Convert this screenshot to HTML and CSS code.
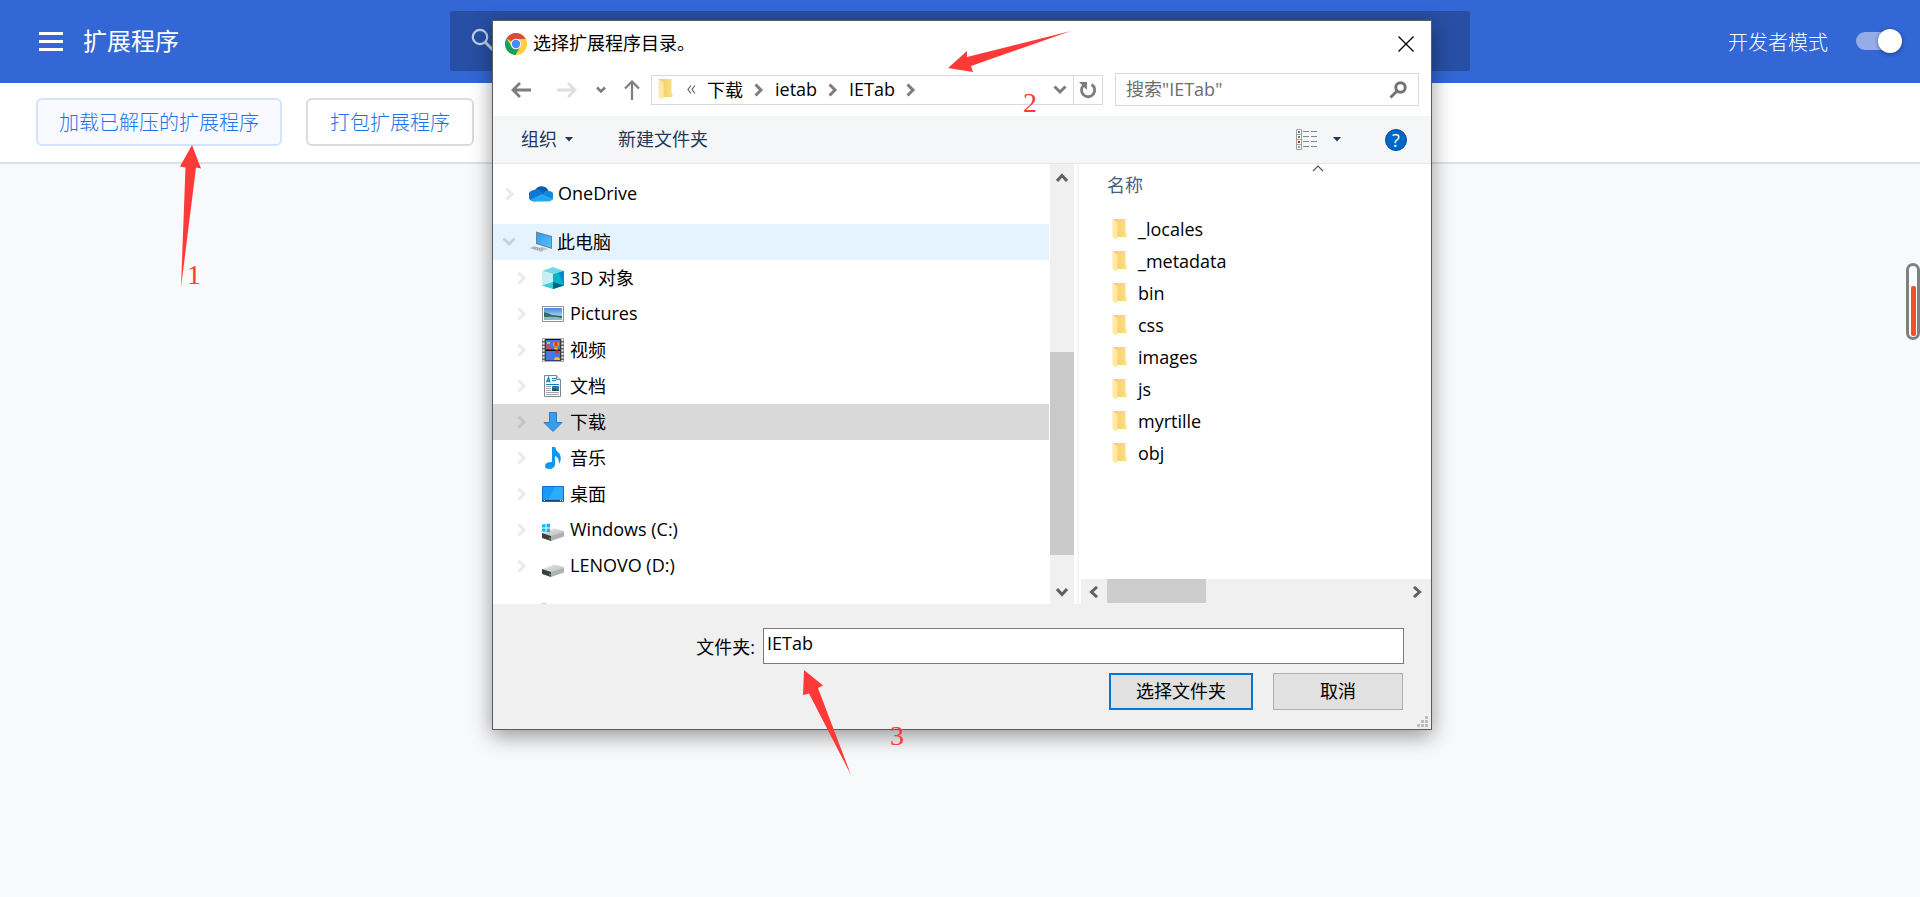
FILE: index.html
```html
<!DOCTYPE html>
<html lang="zh-CN">
<head>
<meta charset="utf-8">
<title>扩展程序</title>
<link rel="stylesheet" href="styles.css">
</head>
<body>
<svg class="defs" aria-hidden="true">
  <defs>
    <linearGradient id="gold" x1="0" x2="1" y1="0" y2="0"><stop offset="0" stop-color="#efcc66"/><stop offset="1" stop-color="#fddf83"/></linearGradient>
    <linearGradient id="metal" x1="0" x2="1" y1="0" y2="1"><stop offset="0" stop-color="#e9e9ea"/><stop offset="1" stop-color="#b9babc"/></linearGradient>
    <linearGradient id="screen" x1="0" x2="1" y1="0" y2="1"><stop offset="0" stop-color="#2f9cf0"/><stop offset="1" stop-color="#59c0fb"/></linearGradient>
    <linearGradient id="sky" x1="0" x2="0" y1="0" y2="1"><stop offset="0" stop-color="#4a86e0"/><stop offset="1" stop-color="#e5f1fa"/></linearGradient>
  </defs>
  <symbol id="folder" viewBox="0 0 16 22">
    <path d="M1 1h12.500v13.500l1 1V19H4z" fill="url(#gold)"/>
    <path d="M0.500 1l5 3.500v13.500l-1 4-4-3z" fill="#ffe9a6"/>
  </symbol>
  <symbol id="chev" viewBox="0 0 10 14"><path d="M1.500 1.500L7 7l-5.500 5.500" fill="none" stroke="currentColor" stroke-width="3"/></symbol>
  <symbol id="caret" viewBox="0 0 8 5"><path d="M0 0h8L4 4.500z" fill="currentColor"/></symbol>
  <symbol id="arrow" viewBox="0 0 12 10"><path d="M1 8l5-5.500L11 8" fill="none" stroke="currentColor" stroke-width="3"/></symbol>
  <symbol id="drive" viewBox="0 0 22 22">
    <path d="M0 14.500l12-5 10 2.500v3L9 18z" fill="url(#metal)"/>
    <path d="M0 14l9 3v5l-9-3z" fill="#3c3f40"/>
    <path d="M9 17l13-4v4.500L9 22z" fill="#b0b1b3"/>
    <path d="M7 18.500l1.500.5v1.500L7 20z" fill="#4fc04f"/>
  </symbol>
</svg>

<header class="topbar">
  <div class="topbar-left">
    <button class="menu" aria-label="主菜单"><span></span><span></span><span></span></button>
    <h1 class="page-title">扩展程序</h1>
  </div>
  <div class="top-search">
    <svg width="28" height="28" viewBox="0 0 28 28"><circle cx="10" cy="10" r="7.200" fill="none" stroke="currentColor" stroke-width="2.200"/><path d="M15 15l9 9" stroke="currentColor" stroke-width="3"/></svg>
    <input class="top-search-input" type="text" aria-label="搜索扩展程序">
  </div>
  <label class="dev-mode">开发者模式<input class="toggle" type="checkbox" checked></label>
</header>

<div class="actions">
  <button class="action action-on">加载已解压的扩展程序</button>
  <button class="action">打包扩展程序</button>
</div>

<section class="dialog" role="dialog" aria-label="选择扩展程序目录">
  <div class="titlebar">
    <svg width="22" height="22" viewBox="0 0 22 22"><circle cx="11" cy="11" r="11" fill="#ffcd40"/><path d="M11 11L1.470 5.500A11 11 0 0 1 20.500 5.500L20.500 6H11z" fill="#db4a3e"/><path d="M1.470 5.500A11 11 0 0 0 10.500 22L15.300 13.500 6.700 13.500z" fill="#15a05f"/><circle cx="11" cy="11" r="5.300" fill="#f5f5f5"/><circle cx="11" cy="11" r="4.200" fill="#4a8af4"/></svg>
    <span class="title-text">选择扩展程序目录。</span>
    <button class="bare close" aria-label="关闭"><svg width="16" height="16" viewBox="0 0 16 16"><path d="M.5.500l15 15M15.500.500l-15 15" stroke="#000" stroke-width="1.300"/></svg></button>
  </div>

  <div class="nav">
    <button class="bare" aria-label="后退"><svg width="20" height="18" viewBox="0 0 20 18"><path d="M9 2L2 9l7 7M2 9h18" fill="none" stroke="#7d7d7d" stroke-width="2.800"/></svg></button>
    <button class="bare forward" aria-label="前进"><svg width="20" height="18" viewBox="0 0 20 18"><path d="M11 2l7 7-7 7M18 9H0" fill="none" stroke="#dedede" stroke-width="2.800"/></svg></button>
    <button class="bare recent" aria-label="最近位置"><svg width="10" height="8" viewBox="0 0 10 8"><path d="M1 1.500l4 4 4-4" fill="none" stroke="#7d7d7d" stroke-width="2.500"/></svg></button>
    <button class="bare up" aria-label="上移"><svg width="16" height="20" viewBox="0 0 16 20"><path d="M1 8.500l7-7 7 7M8 1.500V20" fill="none" stroke="#7d7d7d" stroke-width="2.200"/></svg></button>
    <div class="address">
      <svg class="folder" width="16" height="22"><use href="#folder"/></svg>
      <span class="more"><svg width="9" height="9" viewBox="0 0 9 9"><path d="M4 .5l-3 4 3 4M8 .5l-3 4 3 4" fill="none" stroke="#666" stroke-width="1.200"/></svg></span>
      <span class="crumb">下载</span><svg class="crumb-chev" width="10" height="14"><use href="#chev"/></svg>
      <span class="crumb">ietab</span><svg class="crumb-chev" width="10" height="14"><use href="#chev"/></svg>
      <span class="crumb">IETab</span><svg class="crumb-chev" width="10" height="14"><use href="#chev"/></svg>
      <button class="bare address-drop" aria-label="以前的位置"><svg width="14" height="10" viewBox="0 0 14 10"><path d="M1.500 1.500L7 7l5.500-5.500" fill="none" stroke="#7d7d7d" stroke-width="3"/></svg></button>
      <button class="bare refresh" aria-label="刷新"><svg width="18" height="18" viewBox="0 0 18 18"><path d="M12.500 3.500A6.600 6.600 0 1 1 5 4" fill="none" stroke="#7d7d7d" stroke-width="2.800"/><path d="M0 1h8v8z" fill="#7d7d7d"/></svg></button>
    </div>
    <div class="find">
      <input class="find-input" type="text" placeholder='搜索"IETab"' aria-label="搜索">
      <svg width="18" height="18" viewBox="0 0 18 18"><circle cx="11.500" cy="6.500" r="4.700" fill="none" stroke="#737373" stroke-width="3"/><path d="M8 10l-6.500 6.500" stroke="#737373" stroke-width="3"/></svg>
    </div>
  </div>

  <div class="tools">
    <button class="bare tool"><span>组织</span><svg width="8" height="5"><use href="#caret"/></svg></button>
    <button class="bare tool"><span>新建文件夹</span></button>
    <button class="bare tool view" aria-label="更改视图">
      <svg width="22" height="22" viewBox="0 0 22 22"><path d="M.5.500h5v20h-5zM.5 5.500h5M.5 10.500h5M.5 15.500h5" fill="#fff" stroke="#a0a0a0"/><path d="M7 2.500h6M15 2.500h6M7 7.500h6M15 7.500h6M7 12.500h6M15 12.500h6M7 17.500h6M15 17.500h6" stroke="#858585"/><path d="M2 2h2v2H2z" fill="#3c7fd0"/><path d="M2 7h2v2H2z" fill="#9a7320"/><path d="M2 12h2v2H2z" fill="#c8200c"/><path d="M2 17h2v2H2z" fill="#7cb072"/></svg>
      <svg width="8" height="5"><use href="#caret"/></svg>
    </button>
    <button class="help" aria-label="帮助">?</button>
  </div>

  <div class="panes">
    <ul class="tree">
      <li class="node root">
        <svg class="chev" width="10" height="14"><use href="#chev"/></svg>
        <svg width="24" height="24" viewBox="0 0 24 24"><path d="M6 8A7.500 7.500 0 0 1 19.500 9L14 15z" fill="#0a5cb4"/><path d="M5 19.500A5.700 5.700 0 0 1 5 8Q9 6 13 10l4 8z" fill="#0f77d6"/><path d="M13 14q2-6 7-5a5 5 0 0 1 3 9z" fill="#1488dd"/><path d="M5 19.500Q2 19 1.500 17.500L13 12q5 3 10.500 4.500-1 3-4 3z" fill="#28a8ea"/></svg>
        <span>OneDrive</span>
      </li>
      <li class="node root hover">
        <svg class="chev-down" width="14" height="10" viewBox="0 0 14 10"><path d="M1.500 1.500L7 7l5.500-5.500" fill="none" stroke="currentColor" stroke-width="3"/></svg>
        <svg width="24" height="24" viewBox="0 0 24 24"><path d="M8 1.500l16 4.500v13L8 14z" fill="#6d8496"/><path d="M9 3l14 4v10.500L9 13z" fill="url(#screen)"/><path d="M14 17l6 2-6 1.500-5-1.500z" fill="#b8bec3"/><path d="M1 18l5-2 12 3.500-5 2.500z" fill="#c9cdd0"/><path d="M4 18l10 2.500M6 17l9 2.500" stroke="#8e979e" stroke-dasharray="1.500 1"/></svg>
        <span>此电脑</span>
      </li>
      <li class="node">
        <svg class="chev" width="10" height="14"><use href="#chev"/></svg>
        <svg width="22" height="22" viewBox="0 0 22 22"><path d="M0 4l11-4 11 4-11 3z" fill="#70dbe4"/><path d="M0 4l11 3v15L0 18.500z" fill="#c5f1f2"/><path d="M22 4L11 7v15l11-3.500z" fill="#02b3cc"/><path d="M16.500 5.500L22 4v14.500z" fill="#038bd0"/><path d="M0 18.500L11 15v7z" fill="#39cddb"/><path d="M11 15l11 3.500L11 22z" fill="#00637d"/></svg>
        <span>3D 对象</span>
      </li>
      <li class="node">
        <svg class="chev" width="10" height="14"><use href="#chev"/></svg>
        <svg width="22" height="22" viewBox="0 0 22 22"><path d="M.5 3.500h21v15H.5z" fill="#fff" stroke="#8c9196"/><path d="M2 5h18v12H2z" fill="url(#sky)"/><path d="M2 9q4 1 8 3l10 1v2H2z" fill="#2c6f5a"/><path d="M2 14q9-1 18 1v2H2z" fill="#8fb7c6"/></svg>
        <span>Pictures</span>
      </li>
      <li class="node">
        <svg class="chev" width="10" height="14"><use href="#chev"/></svg>
        <svg width="22" height="24" viewBox="0 0 22 24"><path d="M0 .5h22v23H0z" fill="#646464"/><path d="M1.500 1v22M20.500 1v22" stroke="#eee" stroke-width="2" stroke-dasharray="2 1.500"/><path d="M3.500 1h15v22h-15z" fill="#111"/><path d="M4 2h14v9.500H4zM4 13h14v9.500H4z" fill="#4479e2"/><circle cx="14" cy="6" r="3" fill="#e8a51c"/><path d="M12.500 3.200h3v5h-3z" fill="#e83423"/><path d="M12.500 9.500h3v2h-3zM12 22q0-3 3-3t3 3z" fill="#f5be19"/><path d="M4 6q3 0 6 5H4z" fill="#c84a75"/><path d="M5 4h3v2H5z" fill="#e7c33b"/><circle cx="15" cy="14" r="1.700" fill="#db3526"/></svg>
        <span>视频</span>
      </li>
      <li class="node">
        <svg class="chev" width="10" height="14"><use href="#chev"/></svg>
        <svg width="22" height="22" viewBox="0 0 22 22"><path d="M2.500.500h12l4 4v17h-16z" fill="#fff" stroke="#7e868d"/><path d="M14.500.500v4h4" fill="#dfe5ea" stroke="#7e868d"/><path d="M4.500 7.500l2-5 1.500 5M5 6h3" fill="none" stroke="#1682c4" stroke-width="1.300"/><path d="M10 3.500h4M10 5.500h4M4 9.500h13" stroke="#1682c4"/><path d="M4 11.500h5M4 13.500h5M4 15.500h5M4 17.500h13M4 19.500h13" stroke="#a5a8ac"/><path d="M10 11h7v5h-7z" fill="#3873b7"/><path d="M10 14q4-2 7 2h-7z" fill="#24594e"/></svg>
        <span>文档</span>
      </li>
      <li class="node selected">
        <svg class="chev" width="10" height="14"><use href="#chev"/></svg>
        <svg width="22" height="22" viewBox="0 0 22 22"><path d="M7.500 1.500h7v10h5.500L11 20.500 2 11.500h5.500z" fill="#3b9bed" stroke="#277fc9"/></svg>
        <span>下载</span>
      </li>
      <li class="node">
        <svg class="chev" width="10" height="14"><use href="#chev"/></svg>
        <svg width="22" height="22" viewBox="0 0 22 22"><path d="M10 0h3q1 4 4 6 3 4 1 9l-1 2q0-7-4-8v9q-1 4-6 4-4 0-4-3 0-4 7-4z" fill="#0a99f0"/></svg>
        <span>音乐</span>
      </li>
      <li class="node">
        <svg class="chev" width="10" height="14"><use href="#chev"/></svg>
        <svg width="22" height="22" viewBox="0 0 22 22"><path d="M.5 3.500h21v15H.5z" fill="#169bfc" stroke="#0e6fbe"/><path d="M13 4h8v12.500H6z" fill="#2cabff"/><path d="M1 17.500h20" stroke="#0b4c84"/><path d="M2 17.500h1M18 17.500h1M20 17.500h1" stroke="#fff"/></svg>
        <span>桌面</span>
      </li>
      <li class="node">
        <svg class="chev" width="10" height="14"><use href="#chev"/></svg>
        <svg width="22" height="22" viewBox="0 0 22 22"><use href="#drive"/><path d="M0 5.500l3.500-.5v3.500H0zM4.500 5L8 4.500v4H4.500zM0 9.500h3.500V13L0 12.500zM4.500 9.500H8v4L4.500 13z" fill="#10b7f5"/></svg>
        <span>Windows (C:)</span>
      </li>
      <li class="node">
        <svg class="chev" width="10" height="14"><use href="#chev"/></svg>
        <svg width="22" height="22"><use href="#drive"/></svg>
        <span>LENOVO (D:)</span>
      </li>
      <li class="node root network">
        <svg width="24" height="24" viewBox="0 0 24 24"><path d="M2 1.500h5l3 2v8H1z" fill="#7fb4cc"/></svg>
      </li>
    </ul>
    <div class="vscroll">
      <svg width="12" height="10"><use href="#arrow"/></svg>
      <span class="vthumb"></span>
      <svg class="flip" width="12" height="10"><use href="#arrow"/></svg>
    </div>
    <div class="splitter"></div>
    <div class="files">
      <div class="column-head">
        <button class="bare">名称</button>
        <svg class="sort" width="12" height="7" viewBox="0 0 12 7"><path d="M1 6l5-5 5 5" fill="none" stroke="#555" stroke-width="1.200"/></svg>
      </div>
      <ul class="file-list">
        <li class="file"><svg width="16" height="22"><use href="#folder"/></svg>_locales</li>
        <li class="file"><svg width="16" height="22"><use href="#folder"/></svg>_metadata</li>
        <li class="file"><svg width="16" height="22"><use href="#folder"/></svg>bin</li>
        <li class="file"><svg width="16" height="22"><use href="#folder"/></svg>css</li>
        <li class="file"><svg width="16" height="22"><use href="#folder"/></svg>images</li>
        <li class="file"><svg width="16" height="22"><use href="#folder"/></svg>js</li>
        <li class="file"><svg width="16" height="22"><use href="#folder"/></svg>myrtille</li>
        <li class="file"><svg width="16" height="22"><use href="#folder"/></svg>obj</li>
      </ul>
      <div class="hscroll">
        <svg class="turn-left" width="12" height="10"><use href="#arrow"/></svg>
        <span class="hthumb"></span>
        <svg class="turn-right" width="12" height="10"><use href="#arrow"/></svg>
      </div>
    </div>
  </div>

  <div class="footer">
    <div class="field">
      <label for="folder-name">文件夹:</label>
      <input class="folder-name" id="folder-name" type="text" value="IETab">
    </div>
    <div class="buttons">
      <button class="push primary">选择文件夹</button>
      <button class="push">取消</button>
    </div>
    <svg class="grip" width="11" height="11" viewBox="0 0 11 11"><path d="M8 0h3v3H8zM4 4h3v3H4zM8 4h3v3H8zM0 8h3v3H0zM4 8h3v3H4zM8 8h3v3H8z" fill="#bdbdbd"/></svg>
  </div>

  <div class="mark mark-two"><svg width="124" height="42" viewBox="0 0 124 42"><path d="M0 37L19 20v6L123 0 23 35l2 6z" fill="#fd3a37"/></svg></div>
  <span class="mark digit digit-two">2</span>
  <div class="mark mark-three"><svg width="50" height="106" viewBox="0 0 50 106"><path d="M1 0l19 15.500-5 2.500L48 105 6 23.500 0 25z" fill="#fd3a37"/></svg></div>
  <span class="mark digit digit-three">3</span>
</section>

<div class="mark mark-one"><svg width="22" height="143" viewBox="0 0 22 143"><path d="M12 0l9 23.500-5-1L1 142.500 5.500 22.500 0 21.500z" fill="#fd3a37"/></svg></div>
<span class="mark digit digit-one">1</span>
<div class="gauge"><span></span></div>
</body>
</html>
```
FILE: styles.css
```css
* { box-sizing: border-box; }
body {
  margin: 0;
  min-height: 100vh;
  position: relative;
  overflow: hidden;
  background: #f8f9fb;
  font-family: "Open Sans", "Noto Sans CJK SC", sans-serif;
  font-size: 20px;
}
button, input { font: inherit; color: inherit; }
ul { list-style: none; margin: 0; padding: 0; }
svg { display: block; flex: none; }
.defs { position: absolute; width: 0; height: 0; }

/* Page header */
.topbar {
  display: grid;
  grid-template-columns: 1fr minmax(0, 1020px) 1fr;
  padding: 11px 0 12px;
  background: #3367d6;
  color: #fff;
}
.topbar-left {
  display: flex;
  align-items: center;
  gap: 20px;
  height: 60px;
  padding-left: 39px;
}
.menu {
  display: flex;
  flex-direction: column;
  gap: 5px;
  width: 24px;
  padding: 0;
  border: 0;
  background: none;
}
.menu span { height: 3px; background: #fff; }
.page-title { margin: 0; font-size: 24px; font-weight: 400; line-height: 36px; }
.top-search {
  display: flex;
  align-items: center;
  height: 60px;
  padding: 0 20px;
  border-radius: 3px;
  background: #274fa5;
  color: #c3cfea;
}
.top-search-input { flex: 1; min-width: 0; border: 0; background: none; outline: 0; }
.dev-mode {
  display: flex;
  align-items: center;
  justify-content: flex-end;
  gap: 28px;
  height: 60px;
  padding-right: 16px;
  font-weight: 300;
}
.toggle {
  appearance: none;
  position: relative;
  width: 48px;
  height: 18px;
  margin: 0;
}
.toggle::before {
  content: "";
  position: absolute;
  inset: 0 4px 0 0;
  border-radius: 9px;
  background: #95ade7;
}
.toggle::after {
  content: "";
  position: absolute;
  right: 2px;
  top: -3px;
  width: 24px;
  height: 24px;
  border-radius: 50%;
  background: #fff;
  box-shadow: 0 1px 4px rgba(0, 0, 0, .4);
}
.actions {
  display: flex;
  gap: 24px;
  padding: 15px 36px 16px;
  border-bottom: 2px solid #dfdfdf;
  background: #fff;
}
.action {
  height: 48px;
  min-width: 168px;
  padding: 0 21px 2px;
  border: 2px solid #dadce0;
  border-radius: 6px;
  background: #fff;
  color: #1a73e8;
  font-weight: 300;
}
.action-on { border-color: #d2e3fc; background: #f8faff; }

/* Folder picker */
.dialog {
  position: absolute;
  top: 20px;
  left: calc(50% - 468px);
  width: 940px;
  border: 1px solid #5c5c5c;
  background: #fff;
  color: #000;
  font-size: 18px;
  box-shadow: 0 6px 20px rgba(0, 0, 0, .4);
}
.bare {
  display: flex;
  align-items: center;
  padding: 0;
  border: 0;
  background: none;
}
.titlebar { display: flex; align-items: center; height: 45px; padding: 0 17px 0 12px; }
.title-text { flex: 1; padding: 0 0 3px 6px; }
.nav { display: flex; align-items: center; padding: 7px 12px 10px 18px; }
.forward { margin-left: 26px; }
.recent { margin-left: 19px; }
.up { margin: 0 11px 0 18px; }
.address {
  flex: 1;
  display: flex;
  align-items: center;
  height: 30px;
  padding-left: 6px;
  border: 1px solid #d9d9d9;
}
.address .folder { margin-bottom: 2px; }
.more { padding: 0 11px 0 13px; }
.crumb { padding-bottom: 2px; }
.crumb-chev { margin: 0 11px; color: #7d7d7d; }
.address-drop { margin: 0 6px 0 auto; }
.refresh { width: 29px; height: 28px; justify-content: center; border-left: 1px solid #d9d9d9; }
.find {
  display: flex;
  align-items: center;
  width: 304px;
  height: 33px;
  margin-left: 12px;
  padding: 0 11px 0 10px;
  border: 1px solid #d9d9d9;
}
.find-input { flex: 1; min-width: 0; padding: 0 0 2px; border: 0; outline: 0; background: none; }
.find-input::placeholder { color: #6d6d6d; }
.tools {
  display: flex;
  align-items: center;
  height: 48px;
  padding: 0 24px 0 28px;
  border-bottom: 1px solid #e3e7ea;
  background: #f5f6f7;
  color: #1e395b;
}
.tool { gap: 8px; margin-right: 45px; }
.tool span { padding-bottom: 3px; }
.view { gap: 15px; margin: 0 44px 0 auto; }
.help {
  width: 22px;
  height: 22px;
  padding: 0;
  border: 1px solid #004a91;
  border-radius: 50%;
  background: #0067c5;
  color: #fff;
  font-size: 18px;
  line-height: 20px;
}
.panes { display: flex; height: 440px; }
.tree { flex: 1; padding-top: 12px; overflow: hidden; }
.node {
  display: flex;
  align-items: center;
  height: 36px;
  margin-right: 1px;
  padding-left: 24px;
}
.node span { padding: 0 0 2px 6px; }
.root { padding-left: 12px; margin-bottom: 12px; }
.root span { padding-left: 5px; }
.hover { margin-bottom: 0; padding-left: 9px; background: #e5f3ff; }
.selected { background: #d9d9d9; }
.chev { margin-right: 15px; color: #eaeaea; }
.root .chev { margin-right: 14px; }
.chev-down { margin-right: 12px; color: #c5d2dd; }
.selected .chev { color: #c4c4c4; }
.network { margin-top: 12px; padding-left: 46px; }
.vscroll {
  display: flex;
  flex-direction: column;
  align-items: center;
  width: 24px;
  padding: 9px 0 7px;
  background: #f0f0f0;
  color: #606060;
}
.vthumb { width: 100%; height: 203px; margin: auto 0 32px; background: #c9c9c9; }
.flip { transform: rotate(180deg); }
.splitter { width: 7px; border-left: 3px solid #fff; border-right: 2px solid #fff; background: #f5f5f5; }
.files { width: 350px; display: flex; flex-direction: column; }
.column-head { position: relative; height: 49px; padding: 7px 26px; color: #47617e; }
.sort { position: absolute; top: 1px; left: 231px; }
.file-list { flex: 1; padding-left: 31px; }
.file { display: flex; align-items: center; gap: 10px; height: 32px; }
.hscroll {
  display: flex;
  align-items: center;
  height: 25px;
  padding: 0 8px 0 7px;
  background: #f0f0f0;
  color: #606060;
}
.hthumb { width: 99px; height: 24px; margin: 0 auto 1px 7px; background: #cdcdcd; }
.turn-left { transform: rotate(-90deg); }
.turn-right { transform: rotate(90deg); }
.footer { position: relative; height: 125px; padding: 24px 27px 0; background: #f0f0f0; }
.field { display: flex; align-items: center; justify-content: flex-end; gap: 8px; }
.folder-name {
  width: 641px;
  height: 36px;
  padding: 0 3px 6px;
  border: 1px solid #7a7a7a;
  background: #fff;
  outline: 0;
}
.buttons { display: flex; justify-content: flex-end; gap: 20px; padding: 9px 1px 0 0; }
.push { width: 130px; height: 37px; padding: 0 0 3px; border: 1px solid #adadad; background: #e1e1e1; }
.primary { width: 144px; border: 2px solid #0078d7; }
.grip { position: absolute; right: 3px; bottom: 2px; }

/* Annotations */
.mark { position: absolute; }
.digit {
  color: #fd3a37;
  font-family: "Liberation Serif", serif;
  font-size: 28px;
  line-height: 28px;
}
.mark-one { left: 180px; top: 145px; }
.digit-one { left: 187px; top: 261px; }
.mark-two { left: 455px; top: 10px; }
.digit-two { left: 530px; top: 68px; }
.mark-three { left: 310px; top: 649px; }
.digit-three { left: 397px; top: 701px; }
.gauge {
  position: absolute;
  right: 0;
  top: 263px;
  display: flex;
  align-items: flex-end;
  justify-content: center;
  width: 14px;
  height: 77px;
  padding-bottom: 1px;
  border: 3px solid #808080;
  border-radius: 7px;
  background: #fbfcfd;
}
.gauge span { width: 5px; height: 50px; border-radius: 2px; background: #f25022; }
```
